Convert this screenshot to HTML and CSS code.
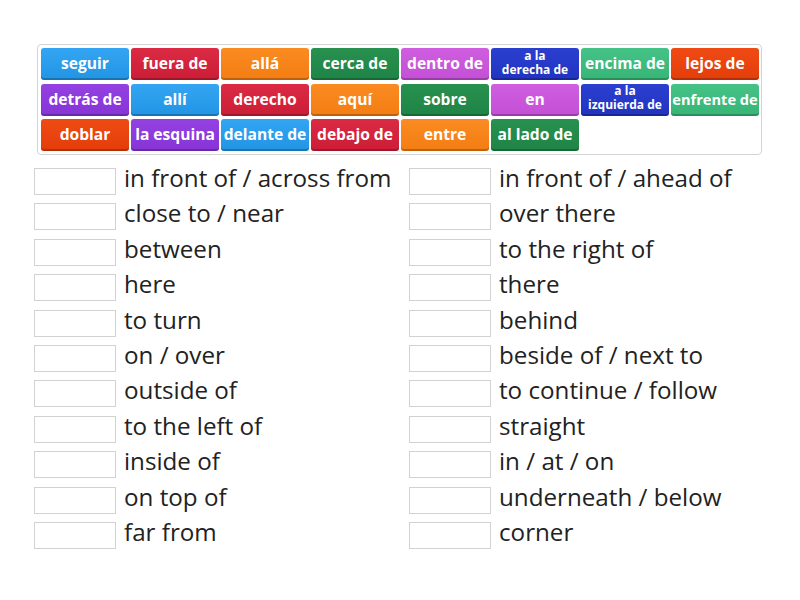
FILE: index.html
```html
<!DOCTYPE html>
<html>
<head>
<meta charset="utf-8">
<link rel="stylesheet" href="styles.css">
</head>
<body>
<div class="bank">
  <div class="tile c1">seguir</div>
  <div class="tile c2">fuera de</div>
  <div class="tile c3">allá</div>
  <div class="tile c4">cerca de</div>
  <div class="tile c5">dentro de</div>
  <div class="tile c6 small">a la<br>derecha de</div>
  <div class="tile c7">encima de</div>
  <div class="tile c8">lejos de</div>
  <div class="tile c9">detrás de</div>
  <div class="tile c1">allí</div>
  <div class="tile c2">derecho</div>
  <div class="tile c3">aquí</div>
  <div class="tile c4">sobre</div>
  <div class="tile c5">en</div>
  <div class="tile c6 small">a la<br>izquierda de</div>
  <div class="tile c7 tight">enfrente de</div>
  <div class="tile c8">doblar</div>
  <div class="tile c9">la esquina</div>
  <div class="tile c1">delante de</div>
  <div class="tile c2">debajo de</div>
  <div class="tile c3">entre</div>
  <div class="tile c4">al lado de</div>
</div>
<div class="answers">
  <div class="col">
    <div class="row"><span class="box"></span><span class="txt">in front of / across from</span></div>
    <div class="row"><span class="box"></span><span class="txt">close to / near</span></div>
    <div class="row"><span class="box"></span><span class="txt">between</span></div>
    <div class="row"><span class="box"></span><span class="txt">here</span></div>
    <div class="row"><span class="box"></span><span class="txt">to turn</span></div>
    <div class="row"><span class="box"></span><span class="txt">on / over</span></div>
    <div class="row"><span class="box"></span><span class="txt">outside of</span></div>
    <div class="row"><span class="box"></span><span class="txt">to the left of</span></div>
    <div class="row"><span class="box"></span><span class="txt">inside of</span></div>
    <div class="row"><span class="box"></span><span class="txt">on top of</span></div>
    <div class="row"><span class="box"></span><span class="txt">far from</span></div>
  </div>
  <div class="col">
    <div class="row"><span class="box"></span><span class="txt">in front of / ahead of</span></div>
    <div class="row"><span class="box"></span><span class="txt">over there</span></div>
    <div class="row"><span class="box"></span><span class="txt">to the right of</span></div>
    <div class="row"><span class="box"></span><span class="txt">there</span></div>
    <div class="row"><span class="box"></span><span class="txt">behind</span></div>
    <div class="row"><span class="box"></span><span class="txt">beside of / next to</span></div>
    <div class="row"><span class="box"></span><span class="txt">to continue / follow</span></div>
    <div class="row"><span class="box"></span><span class="txt">straight</span></div>
    <div class="row"><span class="box"></span><span class="txt">in / at / on</span></div>
    <div class="row"><span class="box"></span><span class="txt">underneath / below</span></div>
    <div class="row"><span class="box"></span><span class="txt">corner</span></div>
  </div>
</div>
</body>
</html>
```
FILE: styles.css
```css
* { box-sizing: border-box; }
body {
  margin: 0;
  background: #fff;
  font-family: "Open Sans", "DejaVu Sans", sans-serif;
}
.bank {
  margin: 44px 0 0 37px;
  width: 725px;
  height: 111px;
  border: 1px solid #d4d4d4;
  border-radius: 4px;
  padding: 3px;
  display: grid;
  grid-template-columns: repeat(8, 88px);
  grid-auto-rows: 32px;
  column-gap: 2px;
  row-gap: 3.5px;
}
.tile {
  border-radius: 3px;
  color: #fff;
  font-weight: 700;
  font-size: 15.6px;
  line-height: 18px;
  display: flex;
  align-items: center;
  justify-content: center;
  text-align: center;
  white-space: nowrap;
  box-shadow: inset 0 -2px 0 rgba(0,0,0,0.22);
  padding-bottom: 2px;
  overflow: hidden;
}
.tile.tight {
  font-size: 14.6px;
}
.tile.small {
  font-size: 12px;
  line-height: 14px;
  padding-bottom: 3px;
}
.c1 { background: linear-gradient(#33a5f2, #2194e4); }
.c2 { background: linear-gradient(#da2a44, #cc1d37); }
.c3 { background: linear-gradient(#fa8b22, #f37d12); }
.c4 { background: linear-gradient(#28914f, #1f8446); }
.c5 { background: linear-gradient(#d05ee0, #c34fd5); }
.c6 { background: linear-gradient(#2b3fd0, #2133c0); }
.c7 { background: linear-gradient(#45c286, #37b577); }
.c8 { background: linear-gradient(#f04a14, #e33e0a); }
.c9 { background: linear-gradient(#9441e2, #8634d6); }

.answers {
  margin: 13px 0 0 34px;
  display: grid;
  grid-template-columns: 375px 375px;
}
.col {
  display: flex;
  flex-direction: column;
  gap: 8.4px;
}
.row {
  display: flex;
  align-items: center;
  height: 27px;
}
.box {
  width: 82px;
  height: 27px;
  border: 1px solid #d2d2d2;
  flex: none;
}
.txt {
  margin-left: 8px;
  font-size: 24.2px;
  color: #222;
  line-height: 27px;
  white-space: nowrap;
  position: relative;
  top: -4px;
}
```
